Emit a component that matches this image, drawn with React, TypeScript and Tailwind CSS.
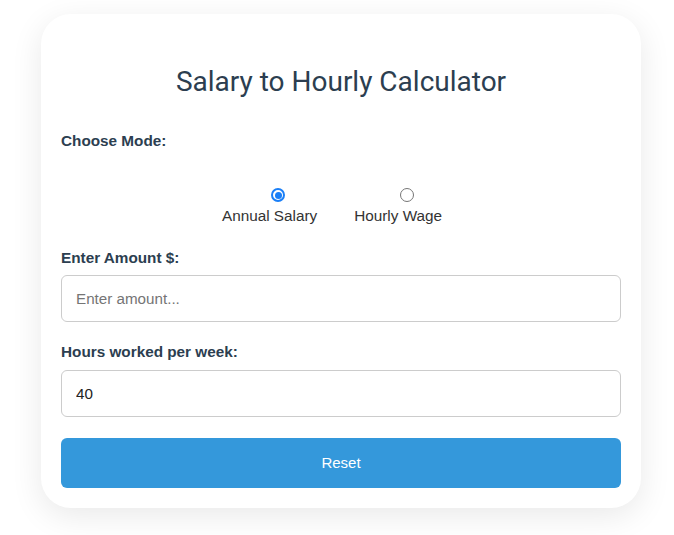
import React, { useState } from "react";

export default function App() {
  const [mode, setMode] = useState<"annual" | "hourly">("annual");
  const [amount, setAmount] = useState("");
  const [hours, setHours] = useState("40");

  const sans = { fontFamily: '"Liberation Sans", Arial, Helvetica, sans-serif' };

  const Radio = ({ checked }: { checked: boolean }) =>
    checked ? (
      <span className="ml-[17px] flex h-[14px] w-[14px] items-center justify-center rounded-full border-2 border-[#1a7ff7] bg-white">
        <span className="h-[7px] w-[7px] rounded-full bg-[#1a7ff7]" />
      </span>
    ) : (
      <span className="ml-[17px] block h-[14px] w-[14px] rounded-full border border-[#767676] bg-white" />
    );

  return (
    <div className="min-h-[535px] w-full bg-white pt-[14px]" style={sans}>
      <div className="ml-[41px] w-[600px] rounded-[30px] bg-white px-5 pb-5 pt-[50px] shadow-[0_8px_32px_rgba(0,0,0,0.09)]">
        <h1
          className="text-center text-[28px] font-normal leading-[36px] text-[#2c3e50]"
          style={{ fontFamily: 'Roboto, "Liberation Sans", sans-serif' }}
        >
          Salary to Hourly Calculator
        </h1>

        <div className="mt-[32px] text-[15.3px] font-bold leading-[18px] text-[#2c3e50]">Choose Mode:</div>

        <div className="mt-[38px] flex justify-center gap-[37px] pr-[18px]">
          <label className="flex cursor-pointer flex-col items-center" onClick={() => setMode("annual")}>
            <Radio checked={mode === "annual"} />
            <span className="mt-[5px] text-[15.3px] leading-[18px] text-[#333]">Annual Salary</span>
          </label>
          <label className="flex cursor-pointer flex-col items-center" onClick={() => setMode("hourly")}>
            <Radio checked={mode === "hourly"} />
            <span className="mt-[5px] text-[15.3px] leading-[18px] text-[#333]">Hourly Wage</span>
          </label>
        </div>

        <div className="mt-[24px] text-[15.3px] font-bold leading-[18px] text-[#2c3e50]">Enter Amount $:</div>
        <input
          value={amount}
          onChange={(e) => setAmount(e.target.value)}
          placeholder="Enter amount..."
          className="mt-2 block h-[47px] w-full rounded-[6px] border border-[#cccccc] px-[14px] text-[15.2px] text-[#222] outline-none placeholder:text-[#757575]"
          style={sans}
        />

        <div className="mt-[21px] text-[15.3px] font-bold leading-[18px] text-[#2c3e50]">Hours worked per week:</div>
        <input
          value={hours}
          onChange={(e) => setHours(e.target.value)}
          className="mt-[9px] block h-[47px] w-full rounded-[6px] border border-[#cccccc] px-[14px] text-[15.2px] text-[#222] outline-none"
          style={sans}
        />

        <button
          onClick={() => {
            setAmount("");
            setHours("40");
            setMode("annual");
          }}
          className="mt-[21px] block h-[50px] w-full rounded-[6px] bg-[#3498db] text-[15px] text-white"
          style={sans}
        >
          Reset
        </button>
      </div>
    </div>
  );
}
